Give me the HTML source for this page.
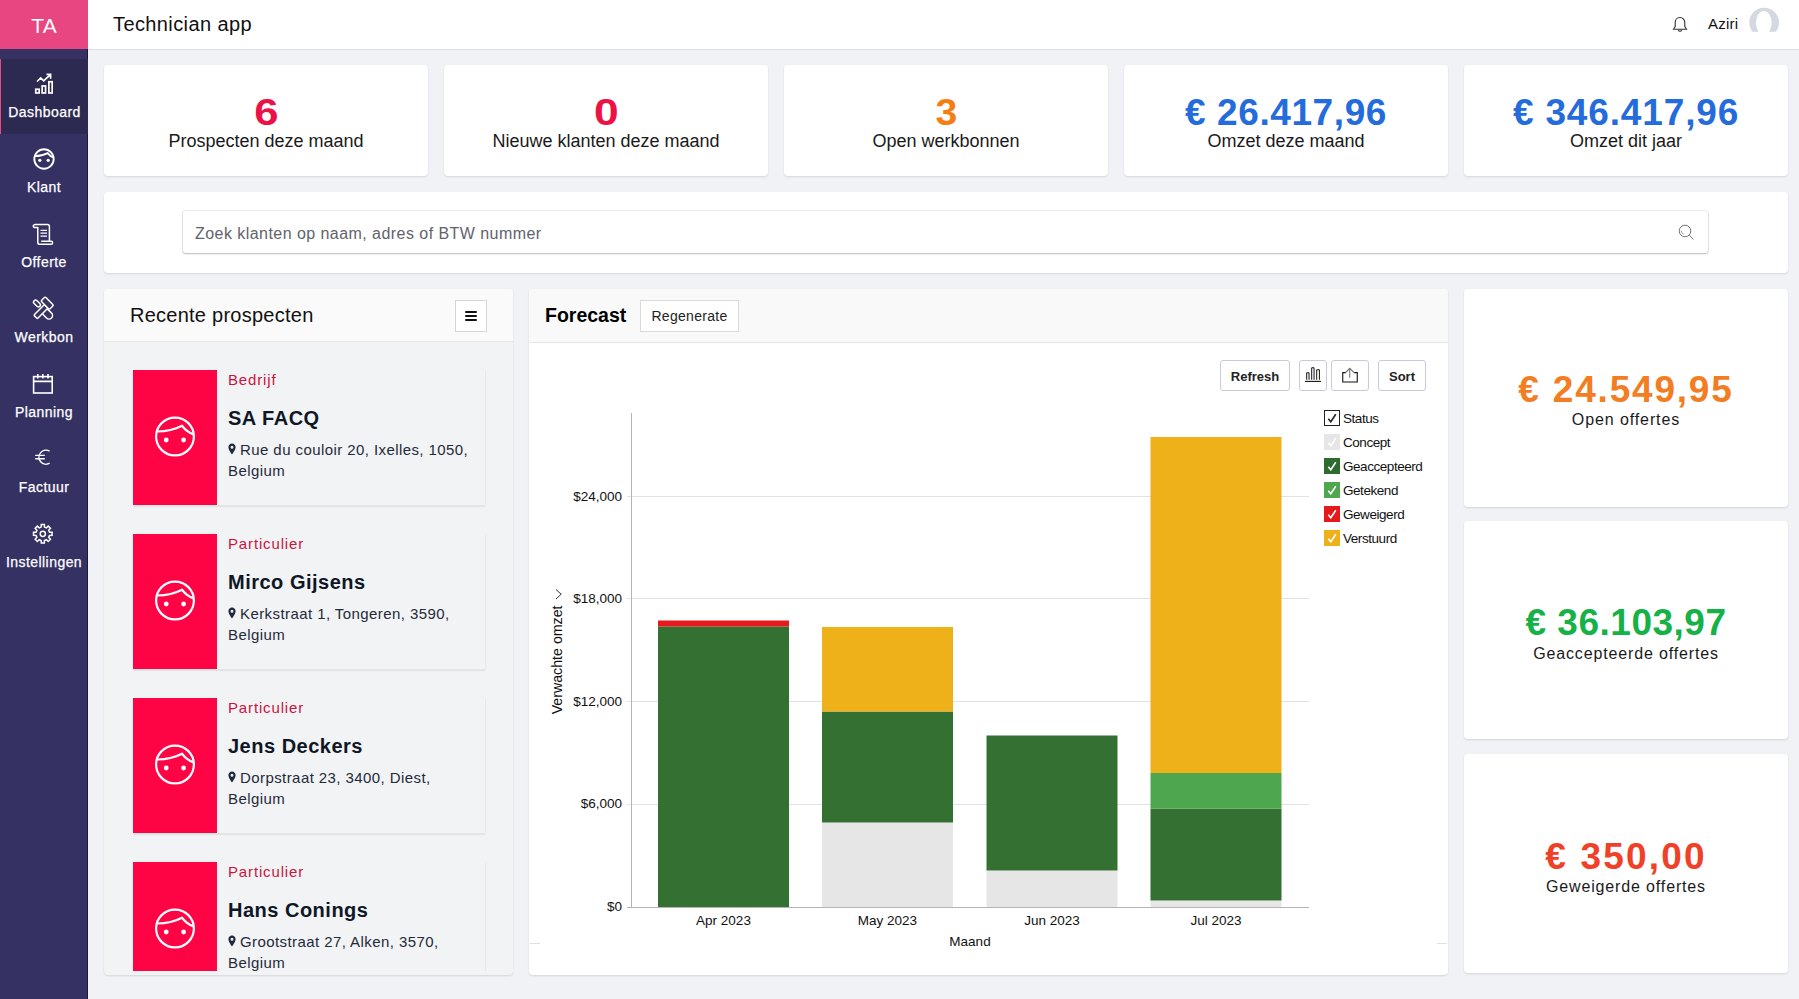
<!DOCTYPE html>
<html><head><meta charset="utf-8">
<style>
*{box-sizing:border-box;margin:0;padding:0}
html,body{width:1799px;height:999px;overflow:hidden;background:#f1f2f5;font-family:"Liberation Sans",sans-serif;color:#212529}
.abs{position:absolute}
#side{position:absolute;left:0;top:0;width:88px;height:999px;background:#353263;border-right:1px solid #1c1a36}
#logo{position:absolute;left:0;top:0;width:88px;height:49px;background:#e84680;color:#fff;font-size:21px;text-align:center;line-height:52px}
.nav{position:absolute;left:0;width:88px;height:75px;color:#fff;text-align:center}
.nav.act{background:#2d2a52;border-left:1px solid #e94a7f}
.nav svg{position:absolute;left:34px;top:15px;width:20px;height:20px}
.nav span{position:absolute;left:0;right:0;top:45px;font-size:14px;line-height:16px;letter-spacing:0.45px;-webkit-text-stroke:0.25px #fff}
#hdr{position:absolute;left:88px;top:0;width:1711px;height:50px;background:#fff;border-bottom:1px solid #dcdde0}
.card{position:absolute;background:#fff;border-radius:4px;box-shadow:0 1px 2px rgba(0,0,0,0.12)}
.stat .num{position:absolute;left:0;right:0;text-align:center;font-weight:700;font-size:37px;line-height:37px;top:28.5px;white-space:nowrap}
.stat .lbl{position:absolute;left:0;right:0;text-align:center;font-size:18px;line-height:20px;top:66px;color:#1a1a1a}
.t{line-height:1;white-space:nowrap}
.btn{border:1px solid #cacade;border-radius:3px;background:#fff;font-size:13px;font-weight:700;color:#222;text-align:center;line-height:31px}
</style></head><body>
<div id="side">
  <div id="logo">TA</div>
  <div class="nav act" style="top:59px">
    <svg viewBox="0 0 24 24" style="left:32px;top:13px;width:24px;height:24px" fill="none" stroke="#fff" stroke-width="1.7"><rect x="2.75" y="17.25" width="3.4" height="3.7"/><rect x="9.15" y="13.95" width="3.4" height="7"/><rect x="15.85" y="9.75" width="3.3" height="11.2"/><path d="M4.1 9.5 L7.7 5.9 L10.7 8.9 L17.4 2.6 M13.5 2.4 H17.6 V6.8"/></svg>
    <span>Dashboard</span></div>
  <div class="nav" style="top:134px">
    <svg viewBox="0 0 42 42" style="left:33px;top:14px;width:22px;height:22px" fill="none" stroke="#fff" stroke-width="3.6"><circle cx="21" cy="21" r="18.5"/><path d="M3.5 15.5 C11 15.5 19 14.5 28 9.8 C30.5 13 34 16.5 39.5 18.4"/><circle cx="13" cy="23.5" r="3.2" fill="#fff" stroke="none"/><circle cx="29" cy="23.5" r="3.2" fill="#fff" stroke="none"/></svg>
    <span>Klant</span></div>
  <div class="nav" style="top:209px">
    <svg viewBox="0 0 24 24" style="left:30px;top:13px;width:24px;height:24px" fill="none" stroke="#fff" stroke-width="1.5" stroke-linejoin="round"><path d="M7.8 5 V20.5 C7.8 21.6 8.6 22.3 9.8 22.3 H21 C22 22.3 22.6 21.6 22.6 20.7 C22.6 19.8 22 19.3 21.2 19.3 H11.2"/><path d="M7.8 5.6 H5.2 C4 5.6 3.3 4.9 3.3 4.1 C3.3 3.2 4 2.6 5.2 2.6 H17.6 C18.7 2.6 19.4 3.3 19.4 4.4 V19.3"/><path d="M10.5 8.3 H17 M10.5 11.2 H17 M10.5 14.1 H17" stroke-width="1.3"/></svg>
    <span>Offerte</span></div>
  <div class="nav" style="top:284px">
    <svg viewBox="0 0 26 26" style="left:30px;top:12px;width:26px;height:26px" fill="#37325f" stroke="#fff" stroke-width="1.5"><g transform="translate(13 13.5) rotate(45)"><rect x="-12.5" y="-2" width="8" height="4" rx="2"/><rect x="0.5" y="-3.5" width="11.5" height="7" rx="3.5"/><rect x="-2.5" y="-4.5" width="5" height="15" rx="1"/><rect x="-7.5" y="-10.5" width="12" height="6" rx="1.5"/></g></svg>
    <span>Werkbon</span></div>
  <div class="nav" style="top:359px">
    <svg viewBox="0 0 24 24" style="left:30px;top:13px;width:24px;height:24px" fill="none" stroke="#fff" stroke-width="1.6"><rect x="3.6" y="4.6" width="18.6" height="16.4"/><path d="M3.6 9.4 H22.2 M7.8 2 V6.6 M12.8 2 V6.6 M18 2 V6.6"/></svg>
    <span>Planning</span></div>
  <div class="nav" style="top:434px">
    <svg viewBox="0 0 24 24" style="left:30px;top:12px;width:24px;height:24px" fill="none" stroke="#fff" stroke-width="1.4"><path d="M19.6 5.2 A7 7 0 1 0 19.6 17.2"/><path d="M5.2 9.4 H14.8 M5.2 12.8 H14.8"/></svg>
    <span>Factuur</span></div>
  <div class="nav" style="top:509px">
    <svg viewBox="0 0 26 26" style="left:30px;top:12px;width:26px;height:26px" fill="none" stroke="#fff" stroke-width="1.5" stroke-linejoin="miter"><path d="M11.16 6.10 L11.27 3.52 L14.33 3.52 L14.44 6.10 L16.38 6.90 L18.28 5.16 L20.44 7.32 L18.70 9.22 L19.50 11.16 L22.08 11.27 L22.08 14.33 L19.50 14.44 L18.70 16.38 L20.44 18.28 L18.28 20.44 L16.38 18.70 L14.44 19.50 L14.33 22.08 L11.27 22.08 L11.16 19.50 L9.22 18.70 L7.32 20.44 L5.16 18.28 L6.90 16.38 L6.10 14.44 L3.52 14.33 L3.52 11.27 L6.10 11.16 L6.90 9.22 L5.16 7.32 L7.32 5.16 L9.22 6.90 Z"/><circle cx="12.8" cy="12.8" r="2.6"/></svg>
    <span>Instellingen</span></div>
</div>
<div id="hdr">
  <div class="abs" style="left:25px;top:13px;font-size:20px;line-height:22px;letter-spacing:0.4px;color:#111">Technician app</div>
  <svg class="abs" style="left:1584px;top:16px" width="16" height="17" viewBox="0 0 16 17" fill="none" stroke="#333" stroke-width="1.1"><path d="M8 1.5 C4.8 1.5 3.2 4 3.2 6.5 V10.5 L1.5 13.2 H14.5 L12.8 10.5 V6.5 C12.8 4 11.2 1.5 8 1.5 Z M6.3 14 A1.8 1.8 0 0 0 9.7 14"/></svg>
  <div class="abs t" style="left:1620px;top:16px;font-size:15px;color:#111;letter-spacing:0.2px">Aziri</div>
  <svg class="abs" style="left:1660px;top:0" width="32" height="49" viewBox="1748 0 32 49"><circle cx="1764.15" cy="22.6" r="14.85" fill="#d4d8e0"/><ellipse cx="1763.8" cy="22.8" rx="7.9" ry="11.9" fill="#fff"/><rect x="1748" y="31.8" width="32" height="17" fill="#fff"/></svg>
</div>

<!-- stat cards -->
<div class="card stat" style="left:104px;top:65px;width:324px;height:111px"><div class="num" style="color:#ec1248"><span style="display:inline-block;transform:scaleX(1.18)">6</span></div><div class="lbl">Prospecten deze maand</div></div>
<div class="card stat" style="left:444px;top:65px;width:324px;height:111px"><div class="num" style="color:#ec1248"><span style="display:inline-block;transform:scaleX(1.2)">0</span></div><div class="lbl">Nieuwe klanten deze maand</div></div>
<div class="card stat" style="left:784px;top:65px;width:324px;height:111px"><div class="num" style="color:#f57d14"><span style="display:inline-block;transform:scaleX(1.06)">3</span></div><div class="lbl">Open werkbonnen</div></div>
<div class="card stat" style="left:1124px;top:65px;width:324px;height:111px"><div class="num" style="color:#246bdb;letter-spacing:0.6px">€ 26.417,96</div><div class="lbl">Omzet deze maand</div></div>
<div class="card stat" style="left:1464px;top:65px;width:324px;height:111px"><div class="num" style="color:#246bdb;letter-spacing:0.85px">€ 346.417,96</div><div class="lbl">Omzet dit jaar</div></div>

<!-- search -->
<div class="card" style="left:104px;top:192px;width:1684px;height:81px">
  <div class="abs" style="left:79px;top:19px;width:1525px;height:42px;border-radius:3px;box-shadow:0 1px 2px rgba(0,0,0,0.22),0 0 0 1px rgba(0,0,0,0.07);background:#fff">
    <div class="abs t" style="left:12px;top:15px;font-size:16px;color:#5f636b;letter-spacing:0.45px">Zoek klanten op naam, adres of BTW nummer</div>
    <svg class="abs" style="left:1494.5px;top:12.5px" width="17" height="17" viewBox="0 0 17 17" fill="none" stroke="#777" stroke-width="1"><circle cx="7" cy="7" r="5.8"/><path d="M11.2 11.2 L15.5 15.5"/><path d="M3.2 6.5 A3.8 3.8 0 0 0 6 10.3" stroke="#aaa"/></svg>
  </div>
</div>

<!-- prospects -->
<div class="card" style="left:104px;top:289px;width:409px;height:686px;background:#f2f3f5;overflow:hidden">
  <div class="abs" style="left:0;top:0;width:409px;height:53px;background:#fafafa;border-bottom:1px solid #e3e4e6">
    <div class="abs t" style="left:26px;top:16px;font-size:20px;color:#111;letter-spacing:0.25px">Recente prospecten</div>
    <div class="abs" style="left:351px;top:11px;width:32px;height:32px;border:1px solid #d6d6d6;background:#fff">
      <div class="abs" style="left:9px;top:10px;width:12px;height:2px;background:#111;border-radius:1px"></div>
      <div class="abs" style="left:9px;top:14px;width:12px;height:2px;background:#111;border-radius:1px"></div>
      <div class="abs" style="left:9px;top:18px;width:12px;height:2px;background:#111;border-radius:1px"></div>
    </div>
  </div>
  <div class="abs" style="left:0;top:54px;width:409px;height:628px;overflow:hidden"><div class="abs" style="left:29px;top:27px;width:352px;height:135px;box-shadow:0 2px 1px rgba(0,0,0,0.06),1px 0 1px rgba(0,0,0,0.035)">
    <div class="abs" style="left:0;top:0;width:84px;height:135px;background:#ff0445"><svg class="abs" style="left:21px;top:46px" width="42" height="42" viewBox="0 0 42 42" fill="none" stroke="#fff" stroke-width="2.2"><circle cx="21" cy="20.5" r="18.9"/><path d="M3.5 15.5 C11 15.5 19 14.5 28 9.8 C30.5 13 34 16.5 39.5 18.4"/><circle cx="12.25" cy="24" r="2.4" fill="#fff" stroke="none"/><circle cx="29.6" cy="24" r="2.4" fill="#fff" stroke="none"/></svg></div>
    
    <div class="abs t" style="left:95px;top:2px;font-size:15px;color:#c8143f;letter-spacing:0.85px">Bedrijf</div>
    <div class="abs t" style="left:95px;top:38px;font-size:20px;font-weight:700;color:#0f1726;letter-spacing:0.5px">SA FACQ</div>
    <div class="abs" style="left:95px;top:69px;width:260px;height:40px"><svg class="abs" style="left:0;top:4px" width="8" height="12" viewBox="0 0 10 14" preserveAspectRatio="none"><path d="M5 0.5 C2.3 0.5 0.5 2.5 0.5 5 C0.5 8 5 13.5 5 13.5 C5 13.5 9.5 8 9.5 5 C9.5 2.5 7.7 0.5 5 0.5 Z M5 3.2 A1.8 1.8 0 1 0 5 6.8 A1.8 1.8 0 1 0 5 3.2 Z" fill="#1f2a3a" fill-rule="evenodd"/></svg><div class="abs" style="left:12px;top:0;font-size:15px;line-height:21px;color:#1f2a3a;letter-spacing:0.42px;white-space:nowrap">Rue du couloir 20, Ixelles, 1050,</div><div class="abs" style="left:0;top:21px;font-size:15px;line-height:21px;color:#1f2a3a;letter-spacing:0.42px">Belgium</div></div>
  </div>
<div class="abs" style="left:29px;top:191px;width:352px;height:135px;box-shadow:0 2px 1px rgba(0,0,0,0.06),1px 0 1px rgba(0,0,0,0.035)">
    <div class="abs" style="left:0;top:0;width:84px;height:135px;background:#ff0445"><svg class="abs" style="left:21px;top:46px" width="42" height="42" viewBox="0 0 42 42" fill="none" stroke="#fff" stroke-width="2.2"><circle cx="21" cy="20.5" r="18.9"/><path d="M3.5 15.5 C11 15.5 19 14.5 28 9.8 C30.5 13 34 16.5 39.5 18.4"/><circle cx="12.25" cy="24" r="2.4" fill="#fff" stroke="none"/><circle cx="29.6" cy="24" r="2.4" fill="#fff" stroke="none"/></svg></div>
    
    <div class="abs t" style="left:95px;top:2px;font-size:15px;color:#c8143f;letter-spacing:0.85px">Particulier</div>
    <div class="abs t" style="left:95px;top:38px;font-size:20px;font-weight:700;color:#0f1726;letter-spacing:0.5px">Mirco Gijsens</div>
    <div class="abs" style="left:95px;top:69px;width:260px;height:40px"><svg class="abs" style="left:0;top:4px" width="8" height="12" viewBox="0 0 10 14" preserveAspectRatio="none"><path d="M5 0.5 C2.3 0.5 0.5 2.5 0.5 5 C0.5 8 5 13.5 5 13.5 C5 13.5 9.5 8 9.5 5 C9.5 2.5 7.7 0.5 5 0.5 Z M5 3.2 A1.8 1.8 0 1 0 5 6.8 A1.8 1.8 0 1 0 5 3.2 Z" fill="#1f2a3a" fill-rule="evenodd"/></svg><div class="abs" style="left:12px;top:0;font-size:15px;line-height:21px;color:#1f2a3a;letter-spacing:0.42px;white-space:nowrap">Kerkstraat 1, Tongeren, 3590,</div><div class="abs" style="left:0;top:21px;font-size:15px;line-height:21px;color:#1f2a3a;letter-spacing:0.42px">Belgium</div></div>
  </div>
<div class="abs" style="left:29px;top:355px;width:352px;height:135px;box-shadow:0 2px 1px rgba(0,0,0,0.06),1px 0 1px rgba(0,0,0,0.035)">
    <div class="abs" style="left:0;top:0;width:84px;height:135px;background:#ff0445"><svg class="abs" style="left:21px;top:46px" width="42" height="42" viewBox="0 0 42 42" fill="none" stroke="#fff" stroke-width="2.2"><circle cx="21" cy="20.5" r="18.9"/><path d="M3.5 15.5 C11 15.5 19 14.5 28 9.8 C30.5 13 34 16.5 39.5 18.4"/><circle cx="12.25" cy="24" r="2.4" fill="#fff" stroke="none"/><circle cx="29.6" cy="24" r="2.4" fill="#fff" stroke="none"/></svg></div>
    
    <div class="abs t" style="left:95px;top:2px;font-size:15px;color:#c8143f;letter-spacing:0.85px">Particulier</div>
    <div class="abs t" style="left:95px;top:38px;font-size:20px;font-weight:700;color:#0f1726;letter-spacing:0.5px">Jens Deckers</div>
    <div class="abs" style="left:95px;top:69px;width:260px;height:40px"><svg class="abs" style="left:0;top:4px" width="8" height="12" viewBox="0 0 10 14" preserveAspectRatio="none"><path d="M5 0.5 C2.3 0.5 0.5 2.5 0.5 5 C0.5 8 5 13.5 5 13.5 C5 13.5 9.5 8 9.5 5 C9.5 2.5 7.7 0.5 5 0.5 Z M5 3.2 A1.8 1.8 0 1 0 5 6.8 A1.8 1.8 0 1 0 5 3.2 Z" fill="#1f2a3a" fill-rule="evenodd"/></svg><div class="abs" style="left:12px;top:0;font-size:15px;line-height:21px;color:#1f2a3a;letter-spacing:0.42px;white-space:nowrap">Dorpstraat 23, 3400, Diest,</div><div class="abs" style="left:0;top:21px;font-size:15px;line-height:21px;color:#1f2a3a;letter-spacing:0.42px">Belgium</div></div>
  </div>
<div class="abs" style="left:29px;top:519px;width:352px;height:135px;box-shadow:0 2px 1px rgba(0,0,0,0.06),1px 0 1px rgba(0,0,0,0.035)">
    <div class="abs" style="left:0;top:0;width:84px;height:135px;background:#ff0445"><svg class="abs" style="left:21px;top:46px" width="42" height="42" viewBox="0 0 42 42" fill="none" stroke="#fff" stroke-width="2.2"><circle cx="21" cy="20.5" r="18.9"/><path d="M3.5 15.5 C11 15.5 19 14.5 28 9.8 C30.5 13 34 16.5 39.5 18.4"/><circle cx="12.25" cy="24" r="2.4" fill="#fff" stroke="none"/><circle cx="29.6" cy="24" r="2.4" fill="#fff" stroke="none"/></svg></div>
    
    <div class="abs t" style="left:95px;top:2px;font-size:15px;color:#c8143f;letter-spacing:0.85px">Particulier</div>
    <div class="abs t" style="left:95px;top:38px;font-size:20px;font-weight:700;color:#0f1726;letter-spacing:0.5px">Hans Conings</div>
    <div class="abs" style="left:95px;top:69px;width:260px;height:40px"><svg class="abs" style="left:0;top:4px" width="8" height="12" viewBox="0 0 10 14" preserveAspectRatio="none"><path d="M5 0.5 C2.3 0.5 0.5 2.5 0.5 5 C0.5 8 5 13.5 5 13.5 C5 13.5 9.5 8 9.5 5 C9.5 2.5 7.7 0.5 5 0.5 Z M5 3.2 A1.8 1.8 0 1 0 5 6.8 A1.8 1.8 0 1 0 5 3.2 Z" fill="#1f2a3a" fill-rule="evenodd"/></svg><div class="abs" style="left:12px;top:0;font-size:15px;line-height:21px;color:#1f2a3a;letter-spacing:0.42px;white-space:nowrap">Grootstraat 27, Alken, 3570,</div><div class="abs" style="left:0;top:21px;font-size:15px;line-height:21px;color:#1f2a3a;letter-spacing:0.42px">Belgium</div></div>
  </div>

</div>
</div>

<!-- forecast -->
<div class="card" style="left:529px;top:289px;width:919px;height:686px;overflow:hidden">
  <div class="abs" style="left:0;top:0;width:919px;height:54px;background:#f9f9f9;border-bottom:1px solid #e5e6e8">
    <div class="abs t" style="left:16px;top:17px;font-size:19.5px;font-weight:700;color:#000">Forecast</div>
    <div class="abs" style="left:111px;top:11px;width:99px;height:32px;border:1px solid #d9d9d9;background:#fff;font-size:14px;text-align:center;line-height:30px;color:#222;letter-spacing:0.3px">Regenerate</div>
  </div>
</div>
<svg class="abs" style="left:0;top:0" width="1799" height="999" viewBox="0 0 1799 999">
  <g fill="none" stroke="#e2e2e2" stroke-width="1">
    <path d="M627 496.5 H1309 M627 598.5 H1309 M627 701.5 H1309 M627 804.5 H1309"/>
  </g>
  <path d="M631.5 413 V907.5 M627 907.5 H1309" stroke="#b4b4b4" stroke-width="1" fill="none"/>
  <!-- bars -->
  <rect x="658" y="626.5" width="131" height="280.5" fill="#337032"/>
  <rect x="658" y="620.5" width="131" height="6" fill="#e41a1c"/>
  <rect x="822" y="822.5" width="131" height="84.5" fill="#e6e6e6"/>
  <rect x="822" y="711.5" width="131" height="111" fill="#337032"/>
  <rect x="822" y="627" width="131" height="84.5" fill="#eeb11a"/>
  <rect x="986.5" y="870.5" width="131" height="36.5" fill="#e6e6e6"/>
  <rect x="986.5" y="735.5" width="131" height="135" fill="#337032"/>
  <rect x="1150.5" y="900.5" width="131" height="6.5" fill="#e6e6e6"/>
  <rect x="1150.5" y="808.5" width="131" height="92" fill="#337032"/>
  <rect x="1150.5" y="773" width="131" height="35.5" fill="#4ea64e"/>
  <rect x="1150.5" y="437" width="131" height="336" fill="#eeb11a"/>
  <g font-family="Liberation Sans" font-size="13.5" fill="#111" text-anchor="end" transform="translate(0 -0.6)">
    <text x="622" y="501.5">$24,000</text>
    <text x="622" y="604">$18,000</text>
    <text x="622" y="706.5">$12,000</text>
    <text x="622" y="809">$6,000</text>
    <text x="622" y="911.5">$0</text>
  </g>
  <g font-family="Liberation Sans" font-size="13.5" fill="#111" text-anchor="middle" transform="translate(0 -0.6)">
    <text x="723.5" y="925.5">Apr 2023</text>
    <text x="887.5" y="925.5">May 2023</text>
    <text x="1052" y="925.5">Jun 2023</text>
    <text x="1216" y="925.5">Jul 2023</text>
    <text x="970" y="946.5">Maand</text>
    <text transform="translate(561.6 660.5) rotate(-90)" font-size="14.2">Verwachte omzet</text>
  </g>
  <path d="M556 589.5 L561.2 594.2 L556 599" fill="none" stroke="#333" stroke-width="1"/>
  <path d="M530 943.5 H540 M1437 943.5 H1447" stroke="#e0e0e0" stroke-width="1"/>
</svg>
<!-- chart toolbar -->
<div class="abs btn" style="left:1220px;top:360px;width:70px;height:31px">Refresh</div>
<div class="abs btn" style="left:1299px;top:360px;width:28px;height:31px"></div>
<div class="abs btn" style="left:1331px;top:360px;width:38px;height:31px"></div>
<svg class="abs" style="left:1303px;top:365px" width="20" height="20" viewBox="0 0 20 20" fill="none" stroke="#111" stroke-width="1"><path d="M3.7 14.75 V7.75 H6.05 V14.75 M8.7 14.75 V2.75 H11.05 V14.75 M13.7 14.75 V4.75 H16.4 V14.75"/><path d="M2 16.4 H18" stroke-width="1.1"/></svg>
<svg class="abs" style="left:1338px;top:365px" width="24" height="20" viewBox="0 0 24 20" fill="none" stroke-width="1.1"><path d="M7.8 7.6 H4.75 V17 H19.25 V7.6 H16.2" stroke="#111"/><path d="M11.75 3.6 V12.75 M7.6 7.5 L11.75 3.3 L15.9 7.5" stroke="#777"/></svg>
<div class="abs btn" style="left:1378px;top:360px;width:48px;height:31px">Sort</div>
<!-- legend -->
<div class="abs" style="left:1324px;top:410px;width:16px;height:16px;background:#fff;border:1px solid #222;"><svg class="abs" style="left:1px;top:2px" width="11" height="10" viewBox="0 0 11 10"><path d="M2.3 5.8 L4.8 8.8 L9.8 1.3" fill="none" stroke="#222" stroke-width="1.6"/></svg></div>
<div class="abs t" style="left:1343px;top:412px;font-size:13.5px;color:#111;letter-spacing:-0.45px">Status</div>
<div class="abs" style="left:1324px;top:434px;width:16px;height:16px;background:#e6e6e6;"><svg class="abs" style="left:2px;top:3px" width="11" height="10" viewBox="0 0 11 10"><path d="M2.3 5.8 L4.8 8.8 L9.8 1.3" fill="none" stroke="#fff" stroke-width="1.6"/></svg></div>
<div class="abs t" style="left:1343px;top:436px;font-size:13.5px;color:#111;letter-spacing:-0.45px">Concept</div>
<div class="abs" style="left:1324px;top:458px;width:16px;height:16px;background:#2e6b2e;"><svg class="abs" style="left:2px;top:3px" width="11" height="10" viewBox="0 0 11 10"><path d="M2.3 5.8 L4.8 8.8 L9.8 1.3" fill="none" stroke="#fff" stroke-width="1.6"/></svg></div>
<div class="abs t" style="left:1343px;top:460px;font-size:13.5px;color:#111;letter-spacing:-0.45px">Geaccepteerd</div>
<div class="abs" style="left:1324px;top:482px;width:16px;height:16px;background:#4ea64e;"><svg class="abs" style="left:2px;top:3px" width="11" height="10" viewBox="0 0 11 10"><path d="M2.3 5.8 L4.8 8.8 L9.8 1.3" fill="none" stroke="#fff" stroke-width="1.6"/></svg></div>
<div class="abs t" style="left:1343px;top:484px;font-size:13.5px;color:#111;letter-spacing:-0.45px">Getekend</div>
<div class="abs" style="left:1324px;top:506px;width:16px;height:16px;background:#e41a1c;"><svg class="abs" style="left:2px;top:3px" width="11" height="10" viewBox="0 0 11 10"><path d="M2.3 5.8 L4.8 8.8 L9.8 1.3" fill="none" stroke="#fff" stroke-width="1.6"/></svg></div>
<div class="abs t" style="left:1343px;top:508px;font-size:13.5px;color:#111;letter-spacing:-0.45px">Geweigerd</div>
<div class="abs" style="left:1324px;top:530px;width:16px;height:16px;background:#eeb11a;"><svg class="abs" style="left:2px;top:3px" width="11" height="10" viewBox="0 0 11 10"><path d="M2.3 5.8 L4.8 8.8 L9.8 1.3" fill="none" stroke="#fff" stroke-width="1.6"/></svg></div>
<div class="abs t" style="left:1343px;top:532px;font-size:13.5px;color:#111;letter-spacing:-0.45px">Verstuurd</div>


<!-- right cards -->
<div class="card" style="left:1464px;top:289px;width:324px;height:218px">
  <div class="abs t" style="left:0;right:0;text-align:center;top:81.5px;font-size:37px;font-weight:700;color:#f27d22;letter-spacing:1.8px">€ 24.549,95</div>
  <div class="abs t" style="left:0;right:0;text-align:center;top:123px;font-size:16px;color:#1a1a1a;letter-spacing:0.9px">Open offertes</div>
</div>
<div class="card" style="left:1464px;top:521px;width:324px;height:218px">
  <div class="abs t" style="left:0;right:0;text-align:center;top:82.5px;font-size:37px;font-weight:700;color:#16b248;letter-spacing:0.5px">€ 36.103,97</div>
  <div class="abs t" style="left:0;right:0;text-align:center;top:125px;font-size:16px;color:#1a1a1a;letter-spacing:0.85px">Geaccepteerde offertes</div>
</div>
<div class="card" style="left:1464px;top:754px;width:324px;height:219px">
  <div class="abs t" style="left:0;right:0;text-align:center;top:84px;font-size:37px;font-weight:700;color:#f04128;letter-spacing:2.2px">€ 350,00</div>
  <div class="abs t" style="left:0;right:0;text-align:center;top:125px;font-size:16px;color:#1a1a1a;letter-spacing:0.85px">Geweigerde offertes</div>
</div>
</body></html>
